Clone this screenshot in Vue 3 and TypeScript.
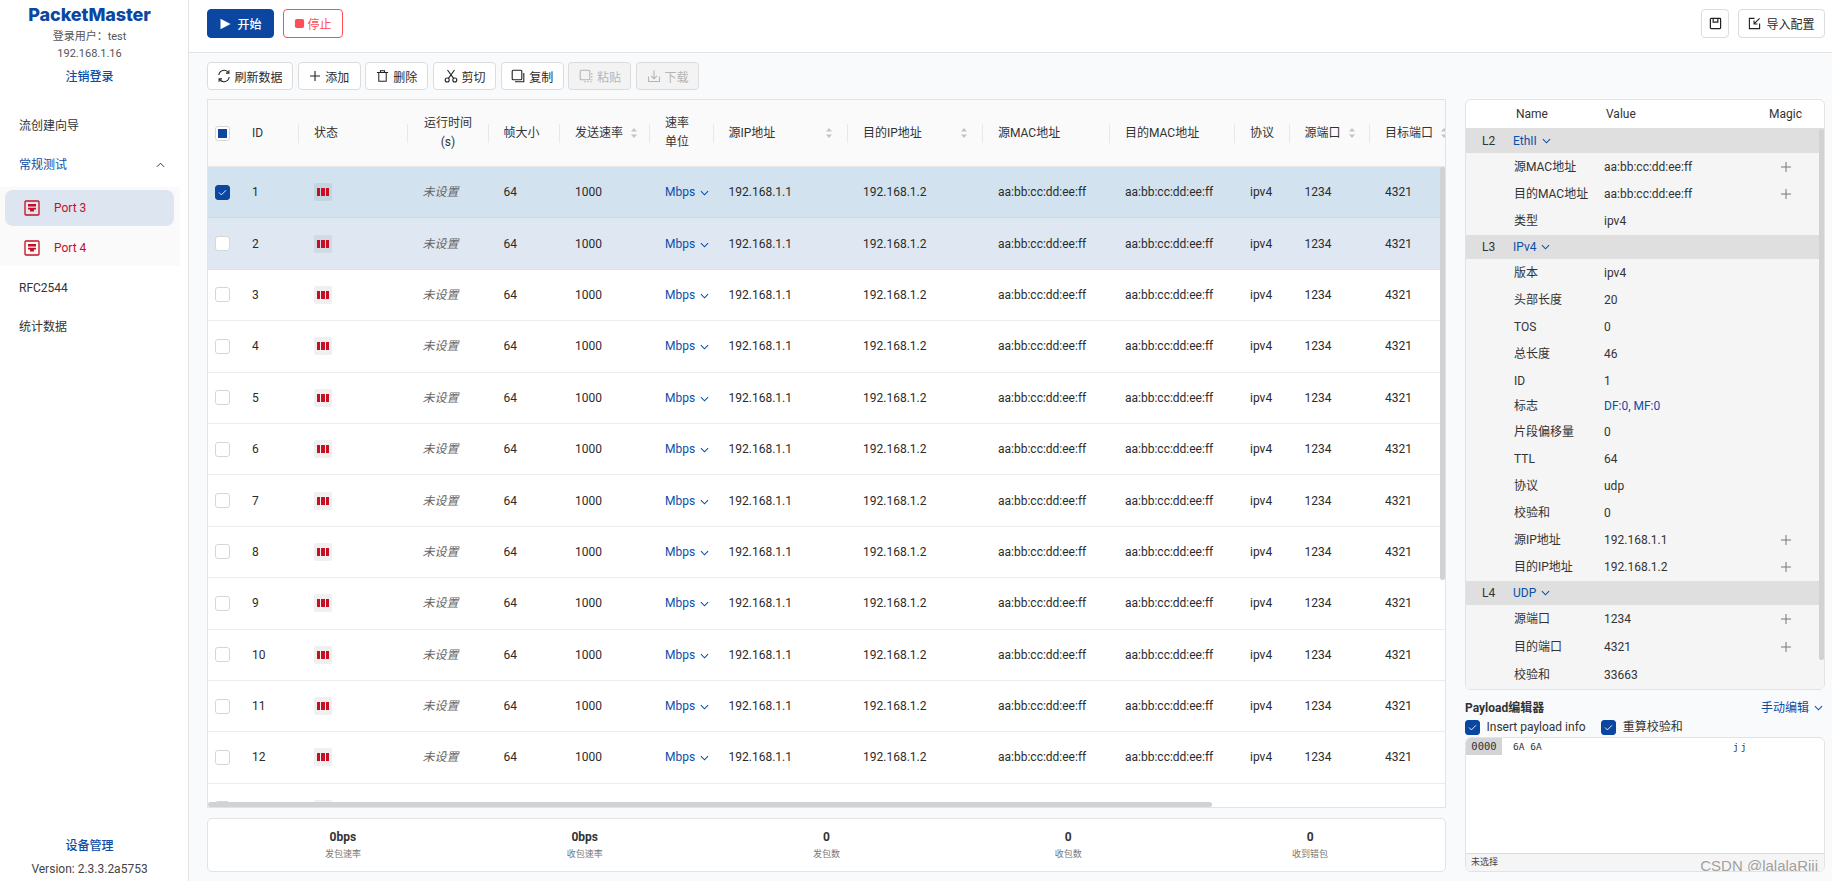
<script setup lang="ts">
interface Field { name: string; value: string; magic?: boolean; link?: boolean; tight?: boolean }
interface Section { level: string; title: string; cls: string; rows: Field[] }

const rows = Array.from({ length: 13 }, (_, i) => i + 1)

const headers = [
  { lines: ['ID'], sort: false, sep: true, cls: '' },
  { lines: ['状态'], sort: false, sep: true, cls: '' },
  { lines: ['运行时间', '(s)'], sort: false, sep: true, cls: 'center' },
  { lines: ['帧大小'], sort: false, sep: true, cls: '' },
  { lines: ['发送速率'], sort: true, sep: true, cls: '' },
  { lines: ['速率', '单位'], sort: false, sep: true, cls: '' },
  { lines: ['源IP地址'], sort: true, sep: true, cls: 'far' },
  { lines: ['目的IP地址'], sort: true, sep: true, cls: 'far' },
  { lines: ['源MAC地址'], sort: false, sep: true, cls: '' },
  { lines: ['目的MAC地址'], sort: false, sep: true, cls: '' },
  { lines: ['协议'], sort: false, sep: true, cls: '' },
  { lines: ['源端口'], sort: true, sep: true, cls: '' },
  { lines: ['目标端口'], sort: true, sep: false, cls: '' },
]

const sections: Section[] = [
  {
    level: 'L2', title: 'EthII', cls: 'sec-l2',
    rows: [
      { name: '源MAC地址', value: 'aa:bb:cc:dd:ee:ff', magic: true },
      { name: '目的MAC地址', value: 'aa:bb:cc:dd:ee:ff', magic: true },
      { name: '类型', value: 'ipv4' },
    ],
  },
  {
    level: 'L3', title: 'IPv4', cls: 'sec-l3',
    rows: [
      { name: '版本', value: 'ipv4' },
      { name: '头部长度', value: '20' },
      { name: 'TOS', value: '0' },
      { name: '总长度', value: '46' },
      { name: 'ID', value: '1' },
      { name: '标志', value: 'DF:0, MF:0', link: true, tight: true },
      { name: '片段偏移量', value: '0' },
      { name: 'TTL', value: '64' },
      { name: '协议', value: 'udp' },
      { name: '校验和', value: '0' },
      { name: '源IP地址', value: '192.168.1.1', magic: true },
      { name: '目的IP地址', value: '192.168.1.2', magic: true },
    ],
  },
  {
    level: 'L4', title: 'UDP', cls: 'sec-l4',
    rows: [
      { name: '源端口', value: '1234', magic: true },
      { name: '目的端口', value: '4321', magic: true },
      { name: '校验和', value: '33663' },
    ],
  },
]

const stats = [
  { value: '0bps', label: '发包速率' },
  { value: '0bps', label: '收包速率' },
  { value: '0', label: '发包数' },
  { value: '0', label: '收包数' },
  { value: '0', label: '收到错包' },
]
</script>

<template>
  <div class="app">
    <aside class="side">
      <div class="brand">
        <div class="logo">PacketMaster</div>
        <div class="user">登录用户：test</div>
        <div class="ip">192.168.1.16</div>
        <div class="logout">注销登录</div>
      </div>
      <nav class="nav">
        <div class="nav-item">流创建向导</div>
        <div class="nav-item active">
          <span>常规测试</span>
          <svg class="nav-chev" viewBox="0 0 10 6" width="9" height="6"><path d="M1 5l4-4 4 4" fill="none" stroke="#333" stroke-width="1.1"/></svg>
        </div>
        <div class="sub">
          <div v-for="(p, i) in ['Port 3', 'Port 4']" :key="p" class="port" :class="{ on: i === 0 }">
            <svg viewBox="0 0 16 16" width="16" height="16" class="port-ic">
              <rect x="1" y="1" width="14" height="14" rx="1" fill="none" stroke="#c40f24" stroke-width="1.3"/>
              <path d="M4 4h8v2.6H4zM4 7.8h8v1.8h-2v1.9H6V9.6H4z" fill="#c40f24"/>
            </svg>
            <span>{{ p }}</span>
          </div>
        </div>
        <div class="nav-item">RFC2544</div>
        <div class="nav-item">统计数据</div>
      </nav>
      <div class="side-foot">
        <div class="device">设备管理</div>
        <div class="version">Version: 2.3.3.2a5753</div>
      </div>
    </aside>

    <div class="main">
      <header class="top">
        <button class="btn primary">
          <svg viewBox="0 0 12 12" width="12" height="12"><path d="M1.5 .8l10 5.2-10 5.2z" fill="#fff"/></svg>
          <span>开始</span>
        </button>
        <button class="btn danger">
          <svg viewBox="0 0 12 12" width="11" height="11"><rect x="1" y="1" width="10" height="10" rx="2" fill="#ff4d57"/></svg>
          <span>停止</span>
        </button>
        <div class="spacer"></div>
        <button class="btn icon-only">
          <svg viewBox="0 0 14 14" width="13" height="13" fill="none" stroke="#222" stroke-width="1.3"><rect x="1.5" y="1.5" width="11" height="11" rx=".8"/><path d="M4.5 1.5v4h5v-4"/></svg>
        </button>
        <button class="btn plain imp">
          <svg viewBox="0 0 14 14" width="13" height="13" fill="none" stroke="#222" stroke-width="1.2"><path d="M7 1.5H1.5v11h11V7"/><path d="M12.5 1.5L6.5 7.5M6.5 3.8v3.7h3.7"/></svg>
          <span>导入配置</span>
        </button>
      </header>

      <div class="content">
        <div class="left">
          <div class="tools">
            <button class="tbtn w-refresh">
              <svg viewBox="0 0 14 14" width="14" height="14" fill="none" stroke="#222" stroke-width="1.1"><path d="M1.8 6A5.3 5.3 0 0 1 11.4 3.6M12.2 8a5.3 5.3 0 0 1-9.6 2.4"/><path d="M11.9 1.2v2.9H9M2.1 12.8V9.9H5"/></svg>
              <span>刷新数据</span>
            </button>
            <button class="tbtn">
              <svg viewBox="0 0 12 12" width="12" height="12" fill="none" stroke="#222" stroke-width="1.1"><path d="M6 1v10M1 6h10"/></svg>
              <span>添加</span>
            </button>
            <button class="tbtn">
              <svg viewBox="0 0 14 14" width="13" height="14" fill="none" stroke="#222" stroke-width="1.1"><path d="M1 3.2h12M4.8 3.2V1.4h4.4v1.8M3 3.2v9.4h8V3.2"/></svg>
              <span>删除</span>
            </button>
            <button class="tbtn">
              <svg viewBox="0 0 14 14" width="14" height="14" fill="none" stroke="#222" stroke-width="1.1"><circle cx="3.2" cy="11" r="2"/><circle cx="10.8" cy="11" r="2"/><path d="M4.4 9.4L10.5 1M9.6 9.4L3.5 1"/></svg>
              <span>剪切</span>
            </button>
            <button class="tbtn">
              <svg viewBox="0 0 14 14" width="14" height="14" fill="none" stroke="#222" stroke-width="1.1"><rect x="1.2" y="1.2" width="9.6" height="9.6" rx="1"/><path d="M12.8 4v8.8H4"/></svg>
              <span>复制</span>
            </button>
            <button class="tbtn off">
              <svg viewBox="0 0 14 14" width="14" height="14" fill="none" stroke="#b5b5b5" stroke-width="1.1"><rect x="1.2" y="1.2" width="9.6" height="9.6" rx="1"/><path d="M12.8 4v8.8H4" stroke-dasharray="1.6 1.4"/></svg>
              <span>粘贴</span>
            </button>
            <button class="tbtn off">
              <svg viewBox="0 0 14 14" width="14" height="14" fill="none" stroke="#b5b5b5" stroke-width="1.1"><path d="M1.5 7.5v5h11v-5M7 1.5v8M4 6.8l3 3 3-3"/></svg>
              <span>下载</span>
            </button>
          </div>

          <div class="table">
            <div class="grid head">
              <div class="cell chk-cell">
                <span class="box partial"><i></i></span>
              </div>
              <div v-for="h in headers" :key="h.lines[0]" class="cell th" :class="[h.cls, { sep: h.sep }]">
                <div class="th-text">
                  <div v-for="l in h.lines" :key="l">{{ l }}</div>
                </div>
                <svg v-if="h.sort" class="sort" viewBox="0 0 8 12" width="8" height="12"><path d="M4 1l3 3.6H1zM4 11l3-3.6H1z" fill="#c4c4c4"/></svg>
              </div>
            </div>
            <div class="body">
              <div v-for="r in rows" :key="r" class="grid row" :class="{ sel1: r === 1, sel2: r === 2 }">
                <div class="cell chk-cell">
                  <span class="box" :class="{ checked: r === 1 }">
                    <svg v-if="r === 1" viewBox="0 0 12 12" width="11" height="11"><path d="M2.2 6l2.6 2.6 5-5" fill="none" stroke="#fff" stroke-width="1"/></svg>
                  </span>
                </div>
                <div class="cell">{{ r }}</div>
                <div class="cell">
                  <span class="status"><i></i><i></i><i></i></span>
                </div>
                <div class="cell unset">未设置</div>
                <div class="cell">64</div>
                <div class="cell">1000</div>
                <div class="cell unit">
                  <span>Mbps</span>
                  <svg viewBox="0 0 10 6" width="9" height="6"><path d="M1 1l4 4 4-4" fill="none" stroke="#0b4ea8" stroke-width="1.2"/></svg>
                </div>
                <div class="cell">192.168.1.1</div>
                <div class="cell">192.168.1.2</div>
                <div class="cell">aa:bb:cc:dd:ee:ff</div>
                <div class="cell">aa:bb:cc:dd:ee:ff</div>
                <div class="cell">ipv4</div>
                <div class="cell">1234</div>
                <div class="cell">4321</div>
              </div>
            </div>
            <div class="vbar"></div>
            <div class="hbar"></div>
          </div>

          <div class="stats">
            <div v-for="s in stats" :key="s.label" class="stat">
              <div class="stat-v">{{ s.value }}</div>
              <div class="stat-l">{{ s.label }}</div>
            </div>
          </div>
        </div>

        <div class="right">
          <div class="fields">
            <div class="f-head">
              <span class="c-name">Name</span>
              <span class="c-value">Value</span>
              <span class="c-magic">Magic</span>
            </div>
            <div class="f-body">
              <div v-for="s in sections" :key="s.level" :class="s.cls">
                <div class="band">
                  <span class="lvl">{{ s.level }}</span>
                  <span class="band-t">{{ s.title }}</span>
                  <svg viewBox="0 0 10 6" width="9" height="6"><path d="M1 1l4 4 4-4" fill="none" stroke="#0b4ea8" stroke-width="1.2"/></svg>
                </div>
                <div v-for="f in s.rows" :key="f.name" class="f-row" :class="{ tight: f.tight }">
                  <span class="f-name">{{ f.name }}</span>
                  <span class="f-val" :class="{ link: f.link }">{{ f.value }}</span>
                  <svg v-if="f.magic" class="f-plus" viewBox="0 0 10 10" width="10" height="10"><path d="M5 0v10M0 5h10" stroke="#777" stroke-width="1"/></svg>
                </div>
              </div>
            </div>
            <div class="f-bar"></div>
          </div>

          <div class="pay-head">
            <span class="pay-title">Payload编辑器</span>
            <span class="pay-mode">手动编辑</span>
            <svg viewBox="0 0 10 6" width="9" height="6"><path d="M1 1l4 4 4-4" fill="none" stroke="#0b4ea8" stroke-width="1.2"/></svg>
          </div>
          <div class="pay-opts">
            <span class="box checked"><svg viewBox="0 0 12 12" width="11" height="11"><path d="M2.2 6l2.6 2.6 5-5" fill="none" stroke="#fff" stroke-width="1"/></svg></span>
            <span class="opt">Insert payload info</span>
            <span class="box checked"><svg viewBox="0 0 12 12" width="11" height="11"><path d="M2.2 6l2.6 2.6 5-5" fill="none" stroke="#fff" stroke-width="1"/></svg></span>
            <span class="opt">重算校验和</span>
          </div>
          <div class="hex">
            <div class="hex-line">
              <span class="hex-off">0000</span>
              <span class="hex-b">6A 6A</span>
              <span class="hex-a">jj</span>
            </div>
            <div class="hex-foot">未选择</div>
            <span class="mark">CSDN @lalalaRiii</span>
          </div>
        </div>
      </div>
    </div>
  </div>
</template>

<style>
html, body { margin: 0; height: 100%; overflow: hidden; background: #fff; }
</style>

<style scoped>
.app {
  display: flex;
  width: 1832px;
  height: 881px;
  overflow: hidden;
  font-family: Roboto, "Noto Sans CJK SC", sans-serif;
  font-size: 12px;
  line-height: 16px;
  color: #2b2b2b;
}
button { font-family: inherit; }

.side {
  width: 188px;
  flex: none;
  border-right: 1px solid #e3e3e3;
  display: flex;
  flex-direction: column;
  background: #fff;
}
.brand { text-align: center; padding-top: 3px; width: 179px; }
.logo { font-family: Inter, sans-serif; font-weight: 800; font-size: 18px; line-height: 24px; color: #0b47a1; letter-spacing: -0.1px; }
.user { font-size: 11px; line-height: 17px; margin-top: 0.5px; color: #555; }
.ip { font-size: 11px; line-height: 17px; color: #555; }
.logout { font-weight: 500; font-size: 12px; line-height: 18px; margin-top: 6px; color: #0b4ea8; }
.nav { margin-top: 20.5px; flex: 1; }
.nav-item { height: 39px; padding-left: 19px; padding-right: 23px; display: flex; align-items: center; justify-content: space-between; font-size: 12px; color: #333; }
.nav-item.active { color: #0b4ea8; }
.sub { background: #fafafa; width: 180px; height: 79px; padding-top: 3px; box-sizing: border-box; margin: 2.5px 0; }
.port { height: 36px; margin: 0 6px 4px 5px; border-radius: 8px; padding-left: 19px; display: flex; align-items: center; gap: 14px; color: #c40f24; font-size: 12px; }
.port.on { background: #dde5f1; }
.port-ic { flex: none; }
.side-foot { text-align: center; padding-bottom: 3px; width: 179px; }
.device { font-weight: 500; color: #0b4ea8; line-height: 18px; }
.version { font-size: 12px; line-height: 18px; margin-top: 5px; color: #444; }

.main { flex: 1; min-width: 0; display: flex; flex-direction: column; background: #f9fafc; }
.top { box-sizing: border-box; background: #fff; border-bottom: 1px solid #e3e3e3; height: 53px; display: flex; align-items: flex-start; gap: 9px; padding: 9px 7px 0 18px; }
.spacer { flex: 1; }
.btn { height: 29px; border-radius: 4px; border: 1px solid #dcdcdc; background: #fff; display: inline-flex; align-items: center; justify-content: center; gap: 5px; font-size: 12px; padding: 0; color: #2b2b2b; box-sizing: border-box; }
.btn.primary { width: 67px; background: #0b47a1; border-color: #0b47a1; color: #fff; font-weight: 500; gap: 6px; }
.btn.danger { width: 60px; border-color: #ff4d57; color: #ff4d57; gap: 2px; }
.btn.icon-only { width: 28px; }
.btn.plain.imp { width: 87px; }

.content { flex: 1; display: flex; min-height: 0; padding: 9px 7px 0 18px; gap: 19px; }
.left { width: 1239px; flex: none; display: flex; flex-direction: column; }
.tools { display: flex; gap: 4.7px; height: 28px; }
.tbtn { width: 63px; height: 28px; border-radius: 4px; background: #fff; border: 1px solid #dcdcdc; box-sizing: border-box; display: inline-flex; align-items: center; justify-content: center; gap: 4px; padding: 0; font-size: 12px; color: #2b2b2b; }
.tbtn.w-refresh { width: 86px; gap: 3px; }
.tbtn.off { background: #f3f3f3; color: #b5b5b5; }

.table { position: relative; margin-top: 9px; height: 709px; box-sizing: border-box; border: 1px solid #e3e3e3; background: #fff; overflow: hidden; }
.body { height: 636px; overflow: hidden; }
.grid { display: grid; grid-template-columns: 29px 62px 108.5px 81px 71.5px 90px 63.5px 134.5px 135px 127px 125px 54.5px 80.5px 76px; width: 1238px; }
.head { height: 67px; background: #fafafa; border-bottom: 1px solid #e8e8e8; box-sizing: border-box; }
.cell { display: flex; align-items: center; padding-left: 15px; min-width: 0; white-space: nowrap; }
.chk-cell { padding-left: 7px; }
.th { position: relative; font-size: 12px; line-height: 19px; color: #333; gap: 7px; }
.th.far { justify-content: space-between; padding-right: 15px; }
.th.center { justify-content: center; text-align: center; padding-left: 0; }
.th.sep::after { content: ""; position: absolute; right: 0; top: 24px; height: 19px; width: 1px; background: #e8e8e8; }
.sort { flex: none; }
.row { height: 51.4px; border-bottom: 1px solid #ececec; box-sizing: border-box; background: #fff; color: #2b2b2b; }
.row.sel1 { background: #d2e3ef; border-bottom-color: #c8dbe8; }
.row.sel2 { background: #dfe8f2; border-bottom-color: #d8e2ed; }
.box { width: 15px; height: 15px; box-sizing: border-box; border: 1px solid #d6d6d6; border-radius: 3px; background: #fff; display: inline-flex; align-items: center; justify-content: center; flex: none; }
.box.checked { background: #0b47a1; border-color: #0b47a1; }
.box.partial i { width: 9px; height: 9px; background: #0b47a1; display: block; }
.status { width: 18px; height: 18px; border-radius: 2px; background: #f0f0f0; display: inline-flex; align-items: center; justify-content: center; gap: 1px; }
.sel1 .status { background: #c5d5e0; }
.sel2 .status { background: #d0dbe6; }
.status i { width: 3.4px; height: 8px; background: #c40f24; display: block; }
.unset { font-style: italic; color: #666; }
.unit { color: #0b4ea8; gap: 5px; }
.unit svg { margin-top: 2px; }
.vbar { position: absolute; right: 0; top: 67px; width: 5px; height: 413px; background: #d2d2d2; border-radius: 3px; }
.hbar { position: absolute; left: 0; bottom: 0; width: 1004px; height: 5px; background: #d2d2d2; border-radius: 3px; }

.stats { margin-top: 10px; height: 54px; box-sizing: border-box; border: 1px solid #e3e3e3; border-radius: 5px; background: #fff; display: grid; grid-template-columns: repeat(5, 1fr); padding: 0 14px; align-items: center; text-align: center; }
.stat-v { font-weight: 700; font-size: 12px; line-height: 16px; color: #333; }
.stat-l { font-size: 9px; line-height: 14px; color: #777; margin-top: 2px; }

.right { width: 360px; flex: none; padding-top: 37px; box-sizing: border-box; }
.fields { position: relative; height: 591px; box-sizing: border-box; border: 1px solid #e3e3e3; border-radius: 6px; background: #fff; overflow: hidden; }
.f-head { height: 28px; position: relative; display: flex; align-items: center; font-size: 12px; color: #333; }
.c-name { position: absolute; left: 50px; }
.c-value { position: absolute; left: 140px; }
.c-magic { position: absolute; left: 303px; }
.f-body { background: #f5f5f5; }
.band { height: 24px; background: #dfdfdf; display: flex; align-items: center; gap: 5px; padding-left: 16px; }
.sec-l2 .band { height: 25px; }
.lvl { width: 26px; flex: none; color: #333; }
.band-t { color: #0b4ea8; }
.f-row { position: relative; height: 27.33px; display: flex; align-items: center; padding-left: 48px; color: #333; }
.sec-l3 .f-row { height: 27.17px; }
.sec-l3 .f-row.tight { height: 23.2px; }
.sec-l4 .f-row { height: 28px; }
.f-name { width: 90px; flex: none; }
.f-val { flex: 1; }
.f-val.link { color: #0b4ea8; }
.f-plus { position: absolute; left: 315px; top: 50%; transform: translateY(-50%); }
.f-bar { position: absolute; right: 0; top: 29px; width: 5px; height: 531px; background: #d2d2d2; border-radius: 3px; }

.pay-head { display: flex; align-items: center; height: 18px; margin-top: 9px; padding-right: 2px; }
.pay-title { font-weight: 700; font-size: 12px; flex: 1; color: #333; }
.pay-mode { color: #0b4ea8; margin-right: 5px; }
.pay-opts { display: flex; align-items: center; height: 18px; margin-top: 1px; }
.opt { margin-left: 6.5px; margin-right: 15.5px; color: #333; }
.hex { position: relative; height: 135px; box-sizing: border-box; margin-top: 1px; border: 1px solid #e3e3e3; border-radius: 6px; background: #fff; overflow: hidden; display: flex; flex-direction: column; }
.hex-line { position: relative; height: 17px; flex: none; display: flex; align-items: center; font-family: "DejaVu Sans Mono", monospace; font-size: 9.5px; color: #333; }
.hex-off { width: 36px; height: 17px; line-height: 17px; background: #d4d4d4; text-align: center; flex: none; font-size: 10.5px; font-weight: 500; }
.hex-b { margin-left: 11px; }
.hex-a { position: absolute; left: 267px; letter-spacing: 2px; }
.hex-foot { margin-top: auto; height: 18px; box-sizing: border-box; border-top: 1px solid #dcdcdc; background: #f5f5f5; font-size: 9px; line-height: 17px; padding-left: 5px; color: #444; }
.mark { position: absolute; right: 6px; bottom: -3px; font-family: "Liberation Sans", sans-serif; font-size: 15px; line-height: 17px; color: rgba(110,110,110,.65); }
</style>
